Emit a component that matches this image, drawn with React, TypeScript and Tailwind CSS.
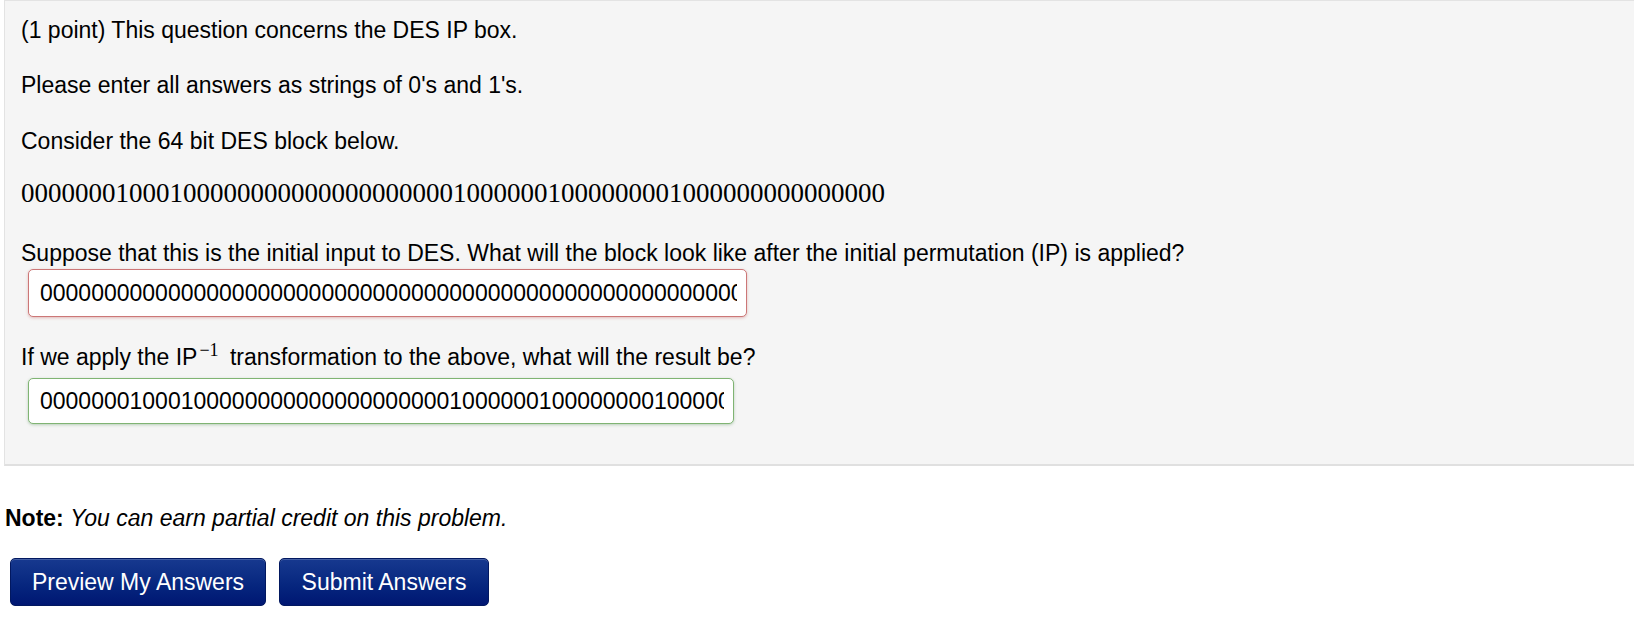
import React from "react";

const sans = { fontFamily: '"Liberation Sans", Arial, sans-serif' };
const serif = { fontFamily: '"Liberation Serif", "Times New Roman", serif' };

const block = "0000000100010000000000000000000010000001000000001000000000000000";

const answers = {
  ip: "0000000000000000000000000000000000000000000000000000000000000000",
  inv: block,
};

export default function App() {
  return (
    <div className="w-[1634px] h-[638px] bg-white text-black overflow-hidden" style={sans}>
      <div className="ml-[4px] w-[1640px] bg-[#f5f5f5] border border-[#e3e3e3] border-b-2 border-b-[#e0e0e0] pl-[16px] pt-[16px] pb-[40px]">
        <p className="text-[23px] leading-[26px]">(1 point) This question concerns the DES IP box.</p>
        <p className="text-[23px] leading-[26px] mt-[29px]">Please enter all answers as strings of 0's and 1's.</p>
        <p className="text-[23px] leading-[26px] mt-[30px]">Consider the 64 bit DES block below.</p>
        <p className="text-[27px] leading-[26px] mt-[26px]" style={serif}>
          {block}
        </p>
        <p className="text-[23px] leading-[26px] mt-[34px]">
          Suppose that this is the initial input to DES. What will the block look like after the initial permutation (IP) is applied?
        </p>
        <input
          readOnly
          value={answers.ip}
          className="block mt-[3px] ml-[7px] w-[719px] h-[48px] pl-[11px] pr-[9px] text-[23px] bg-white border border-[#cc7777] rounded-[5px] shadow-[0_1px_3px_rgba(185,74,72,0.35)] outline-none"
          style={sans}
        />
        <p className="text-[23px] leading-[26px] mt-[27px]">
          If we apply the IP
          <span className="inline-block text-[18px] leading-none relative -top-[9px] ml-[2px] mr-[5px]" style={serif}>
            −1
          </span>{" "}
          transformation to the above, what will the result be?
        </p>
        <input
          readOnly
          value={answers.inv}
          className="block mt-[8px] ml-[7px] w-[706px] h-[46px] pl-[11px] pr-[9px] text-[23px] bg-white border border-[#80b473] rounded-[5px] shadow-[0_1px_3px_rgba(70,136,71,0.35)] outline-none"
          style={sans}
        />
      </div>

      <p className="ml-[5px] mt-[40px] text-[23px] leading-[24px]">
        <span className="font-bold">Note:</span> <i>You can earn partial credit on this problem.</i>
      </p>

      <div className="flex gap-[13px] ml-[10px] mt-[28px]">
        <button className="w-[256px] h-[48px] rounded-[5px] border border-[#021860] bg-gradient-to-b from-[#17398f] to-[#001672] text-white text-[23px] shadow-[inset_0_1px_0_rgba(255,255,255,0.2)]">
          Preview My Answers
        </button>
        <button className="w-[210px] h-[48px] rounded-[5px] border border-[#021860] bg-gradient-to-b from-[#17398f] to-[#001672] text-white text-[23px] shadow-[inset_0_1px_0_rgba(255,255,255,0.2)]">
          Submit Answers
        </button>
      </div>
    </div>
  );
}
